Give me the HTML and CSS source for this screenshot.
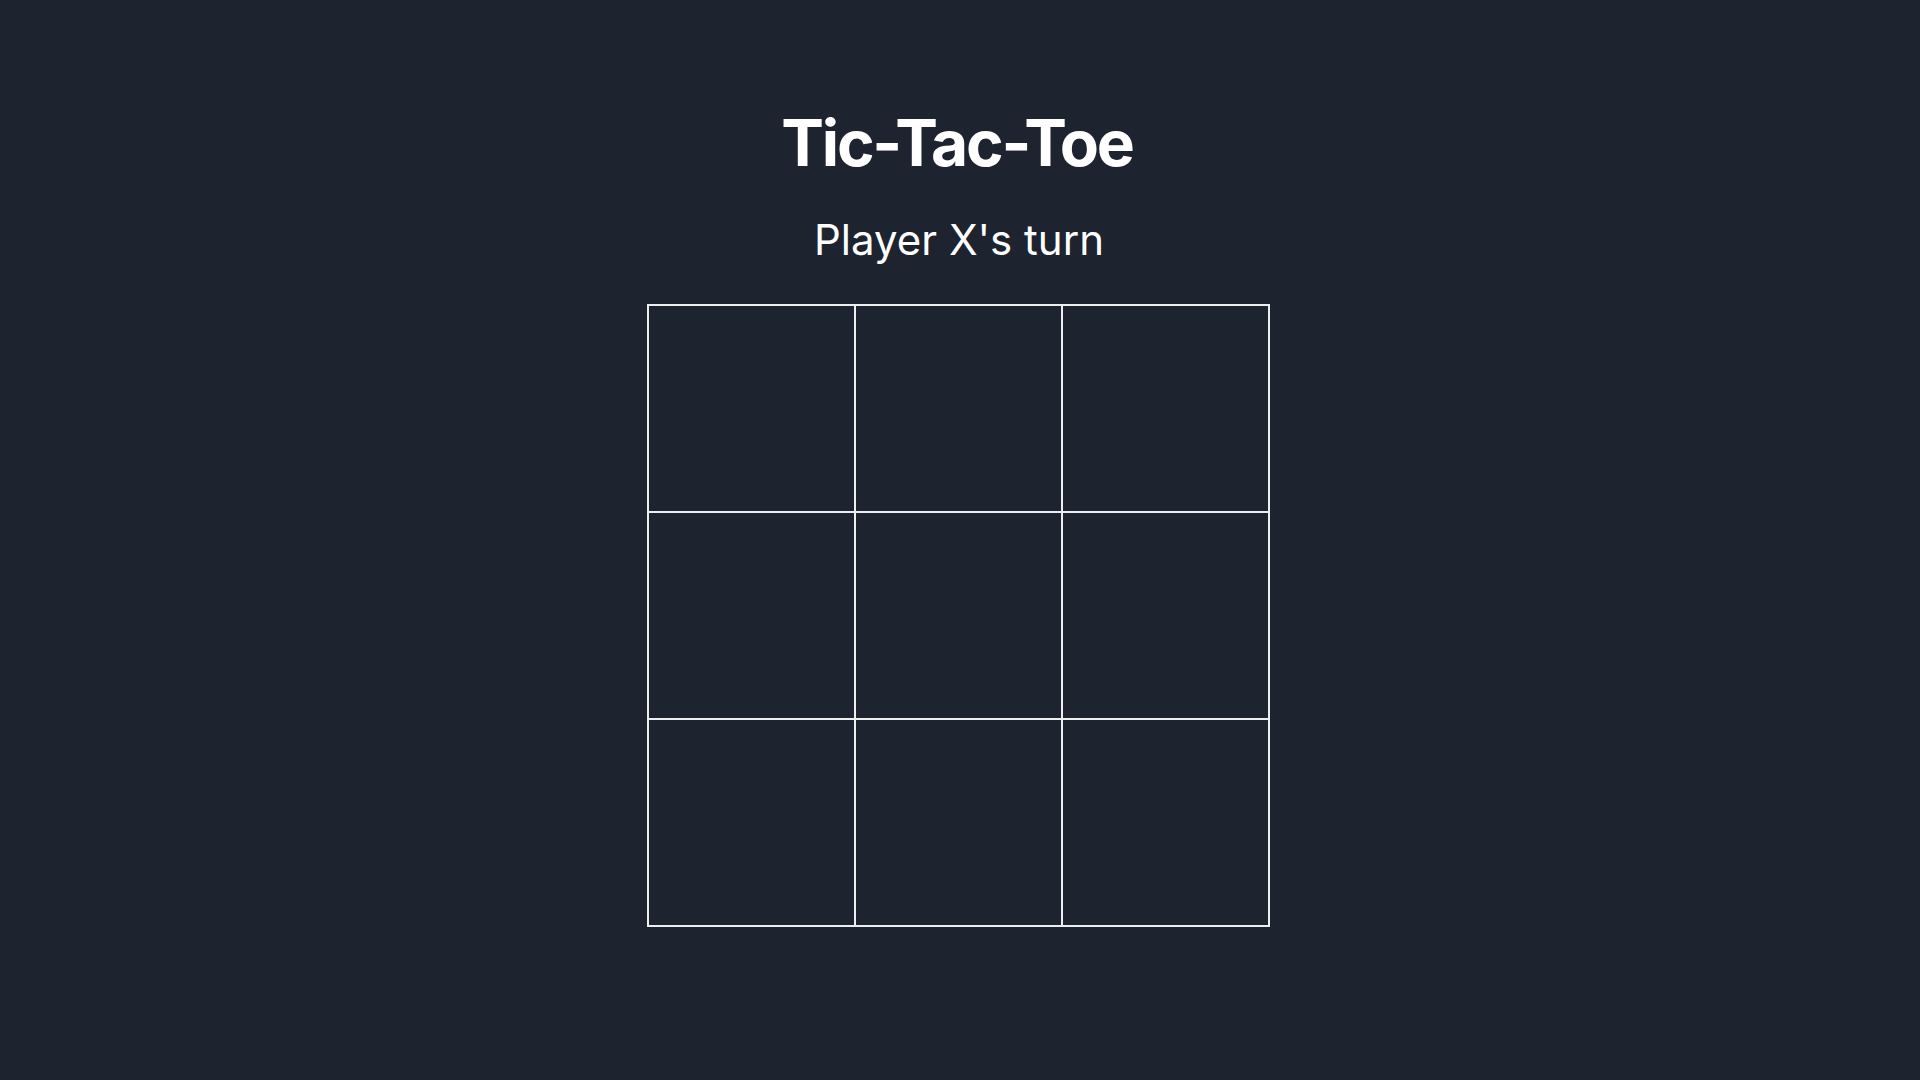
FILE: index.html
```html
<!DOCTYPE html>
<html lang="en">
<head>
<meta charset="utf-8">
<title>Tic-Tac-Toe</title>
<link rel="stylesheet" href="styles.css">
</head>
<body>
<main class="game">
  <h1 class="title">Tic-Tac-Toe</h1>
  <p class="status">Player X's turn</p>
  <div class="board">
    <button class="cell"></button>
    <button class="cell"></button>
    <button class="cell"></button>
    <button class="cell"></button>
    <button class="cell"></button>
    <button class="cell"></button>
    <button class="cell"></button>
    <button class="cell"></button>
    <button class="cell"></button>
  </div>
</main>
</body>
</html>
```

FILE: styles.css
```css
html, body {
  margin: 0;
  padding: 0;
  height: 100%;
  background: #1e2330;
}

body {
  font-family: Inter, "Noto Sans", "Liberation Sans", sans-serif;
  color: #ffffff;
}

.game {
  display: flex;
  flex-direction: column;
  align-items: center;
  padding-top: 104px;
}

.title {
  margin: 0 0 0 -6px;
  font-size: 64px;
  line-height: 78px;
  font-weight: 700;
  letter-spacing: -2.2px;
}

.status {
  margin: 33px 0 0 -2px;
  font-size: 42px;
  line-height: 50px;
  font-weight: 400;
}

.board {
  margin: 39px 0 0 -3px;
  display: grid;
  grid-template-columns: repeat(3, 207px);
  grid-template-rows: repeat(3, 207px);
  border: 1px solid #eceef1;
}

.cell {
  margin: 0;
  padding: 0;
  background: transparent;
  border: 1px solid #eceef1;
  box-sizing: border-box;
  cursor: pointer;
}
```
